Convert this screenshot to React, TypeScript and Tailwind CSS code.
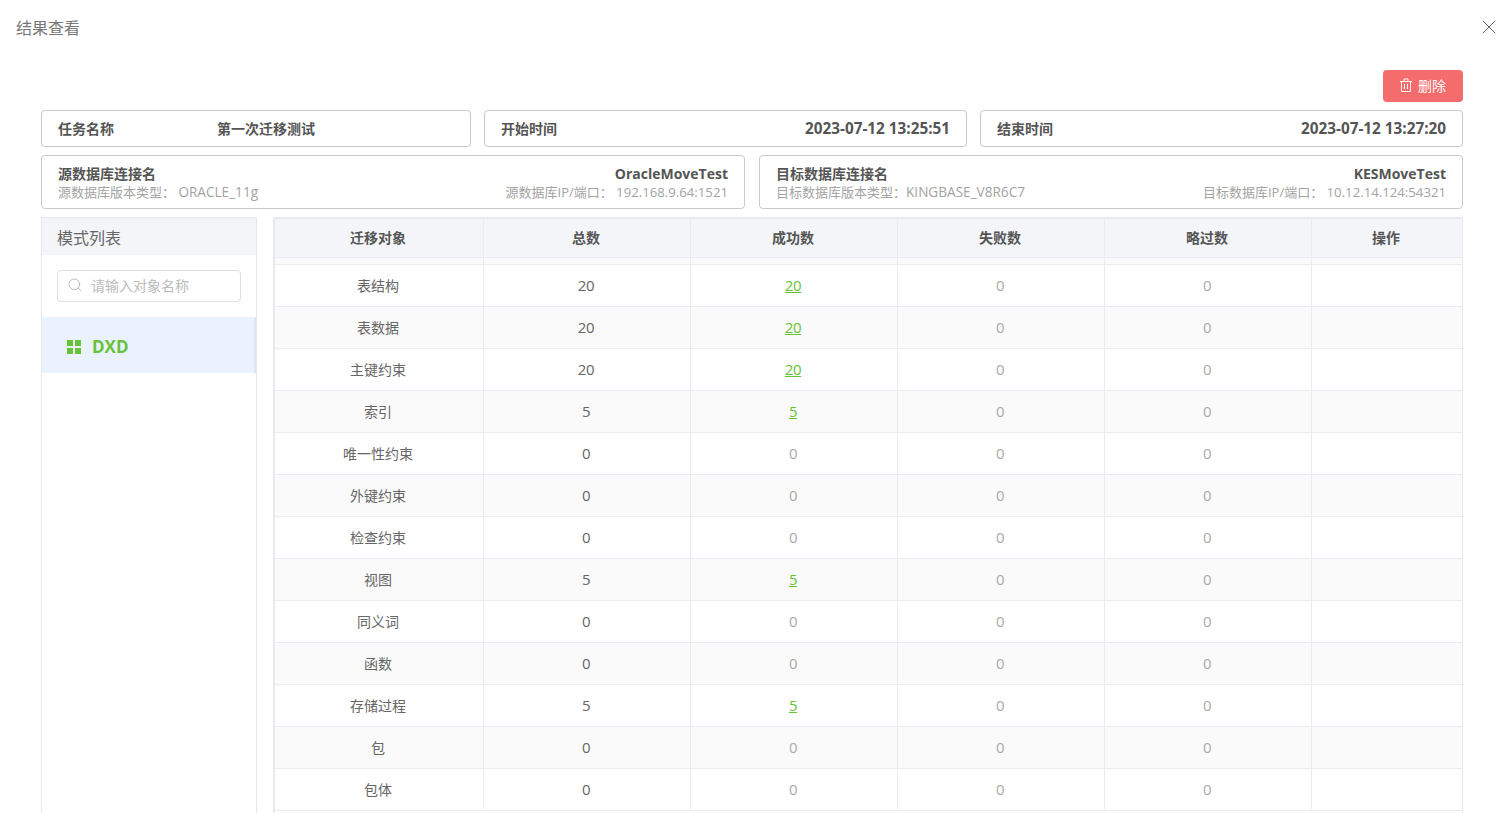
import * as React from 'react';
import { Search, X } from 'lucide-react';

const font = 'font-["Open_Sans","Noto_Sans_CJK_SC",sans-serif]';

const rows = [
  { name: '表结构', total: 20, ok: 20 },
  { name: '表数据', total: 20, ok: 20 },
  { name: '主键约束', total: 20, ok: 20 },
  { name: '索引', total: 5, ok: 5 },
  { name: '唯一性约束', total: 0, ok: 0 },
  { name: '外键约束', total: 0, ok: 0 },
  { name: '检查约束', total: 0, ok: 0 },
  { name: '视图', total: 5, ok: 5 },
  { name: '同义词', total: 0, ok: 0 },
  { name: '函数', total: 0, ok: 0 },
  { name: '存储过程', total: 5, ok: 5 },
  { name: '包', total: 0, ok: 0 },
  { name: '包体', total: 0, ok: 0 },
];

const cols = 'grid grid-cols-[209px_207px_207px_207px_207px_1fr]';
const num = 'text-[15px] tracking-[-0.4px]';
const cell = 'flex items-center justify-center pr-[2px]';

function InfoCard({ label, value, className }: { label: string; value: string; className: string }) {
  return (
    <div className={`${className} h-[37px] flex items-center rounded border border-[#c8c8c8] pl-4 pr-4 text-[14px] font-semibold text-[#555]`}>
      {label === '任务名称' ? (
        <>
          <span className="w-[159px]">{label}</span>
          <span>{value}</span>
        </>
      ) : (
        <>
          <span>{label}</span>
          <span className="ml-auto text-[15.3px] font-bold">{value}</span>
        </>
      )}
    </div>
  );
}

function ConnCard({ title, name, left, leftValue, right, rightValue }: { title: string; name: string; left: string; leftValue: string; right: string; rightValue: string }) {
  return (
    <div className="flex-1 h-[54px] rounded border border-[#c8c8c8] pl-4 pr-4 pt-[9px] text-[14px] leading-[18px]">
      <div className="flex justify-between font-semibold text-[#555]">
        <span>{title}</span>
        <span className="font-bold">{name}</span>
      </div>
      <div className="flex justify-between text-[13px] leading-[18px] text-[#a3a3a3]">
        <span>{left}<span className="text-[13.6px]">{leftValue}</span></span>
        <span>{right}<span className="text-[13.2px]">{rightValue}</span></span>
      </div>
    </div>
  );
}

export default function App() {
  return (
    <div className={`${font} relative h-[813px] overflow-hidden bg-white`}>
      <div className="h-[70px] pl-4 pt-[17px] text-[16px] leading-[22px] text-[#777]">结果查看</div>
      <button className="absolute right-[6px] top-[15px] text-[#666]">
        <X size={24} strokeWidth={1} />
      </button>

      <div className="pl-[41px] pr-[44px]">
        <div className="flex justify-end">
          <button className="flex h-8 w-20 items-center justify-center gap-[6px] rounded bg-[#f56c6c] pb-[2px] text-[14px] text-white">
            <svg width="12" height="14" viewBox="0 0 12 14" fill="none" stroke="currentColor" strokeWidth="1">
              <path d="M0 3.5h12M4 3.5V1h4v2.5M1.5 3.5v10h9v-10M4.5 6v5M7.5 6v5" />
            </svg>
            删除
          </button>
        </div>

        <div className="mt-2 flex gap-[13px]">
          <InfoCard className="w-[430px]" label="任务名称" value="第一次迁移测试" />
          <InfoCard className="flex-1" label="开始时间" value="2023-07-12 13:25:51" />
          <InfoCard className="flex-1" label="结束时间" value="2023-07-12 13:27:20" />
        </div>

        <div className="mt-2 flex gap-[14px]">
          <ConnCard title="源数据库连接名" name="OracleMoveTest" left="源数据库版本类型： " leftValue="ORACLE_11g" right="源数据库IP/端口： " rightValue="192.168.9.64:1521" />
          <ConnCard title="目标数据库连接名" name="KESMoveTest" left="目标数据库版本类型：" leftValue="KINGBASE_V8R6C7" right="目标数据库IP/端口： " rightValue="10.12.14.124:54321" />
        </div>

        <div className="mt-2 flex gap-4">
          <aside className="h-[600px] w-[216px] shrink-0 border border-[#e4e7ed]">
            <div className="h-[37px] bg-[#f3f5f9] pl-[15px] text-[16px] leading-[40px] text-[#666]">模式列表</div>
            <div className="px-[15px] pt-[15px]">
              <div className="flex h-8 items-center gap-2 rounded border border-[#dcdfe6] pb-[2px] pl-[9px] text-[14px] text-[#bbb]">
                <Search size={16} strokeWidth={1} className="text-[#999]" />
                请输入对象名称
              </div>
            </div>
            <div className="mt-[15px] flex h-14 items-center gap-[11px] border-r-2 border-[#e1e6ee] bg-[#e9f2fd] pl-[25px] pt-1 text-[17px] font-bold text-[#67c23a]">
              <svg width="14" height="14" viewBox="0 0 14 14" fill="#67c23a">
                <rect x="0" y="0" width="6" height="6" />
                <rect x="8" y="0" width="6" height="6" />
                <rect x="0" y="8" width="6" height="6" />
                <rect x="8" y="8" width="6" height="6" />
              </svg>
              DXD
            </div>
          </aside>

          <div className="flex-1 min-w-0 border border-l-2 border-t-2 border-[#e6e9f0] text-[14px]">
            <div className={`${cols} h-[38px] bg-[#f3f5f9] font-semibold text-[#555]`}>
              {['迁移对象', '总数', '成功数', '失败数', '略过数', '操作'].map((h, i) => (
                <div key={h} className={`${cell} pb-[2px] ${i < 5 ? 'border-r border-[#e9ecf2]' : ''}`}>{h}</div>
              ))}
            </div>
            <div className={`${cols} h-[8px] border-y border-[#e9ecf2] bg-[#fafafa]`}>
              {[0, 1, 2, 3, 4, 5].map((i) => (
                <div key={i} className={i < 5 ? 'border-r border-[#e9ecf2]' : ''} />
              ))}
            </div>
            {rows.map((r, idx) => (
              <div key={r.name} className={`${cols} h-[42px] border-b border-[#e9ecf2] ${idx % 2 === 1 ? 'bg-[#fafafa]' : 'bg-white'}`}>
                <div className={`${cell} border-r border-[#e9ecf2] text-[#666]`}>{r.name}</div>
                <div className={`${cell} border-r border-[#e9ecf2] text-[#666] ${num}`}>{r.total}</div>
                <div className={`${cell} border-r border-[#e9ecf2] ${num}`}>
                  {r.ok > 0 ? <span className="text-[#67c23a] underline">{r.ok}</span> : <span className="text-[#aaa]">0</span>}
                </div>
                <div className={`${cell} border-r border-[#e9ecf2] text-[#aaa] ${num}`}>0</div>
                <div className={`${cell} border-r border-[#e9ecf2] text-[#aaa] ${num}`}>0</div>
                <div />
              </div>
            ))}
          </div>
        </div>
      </div>
    </div>
  );
}
